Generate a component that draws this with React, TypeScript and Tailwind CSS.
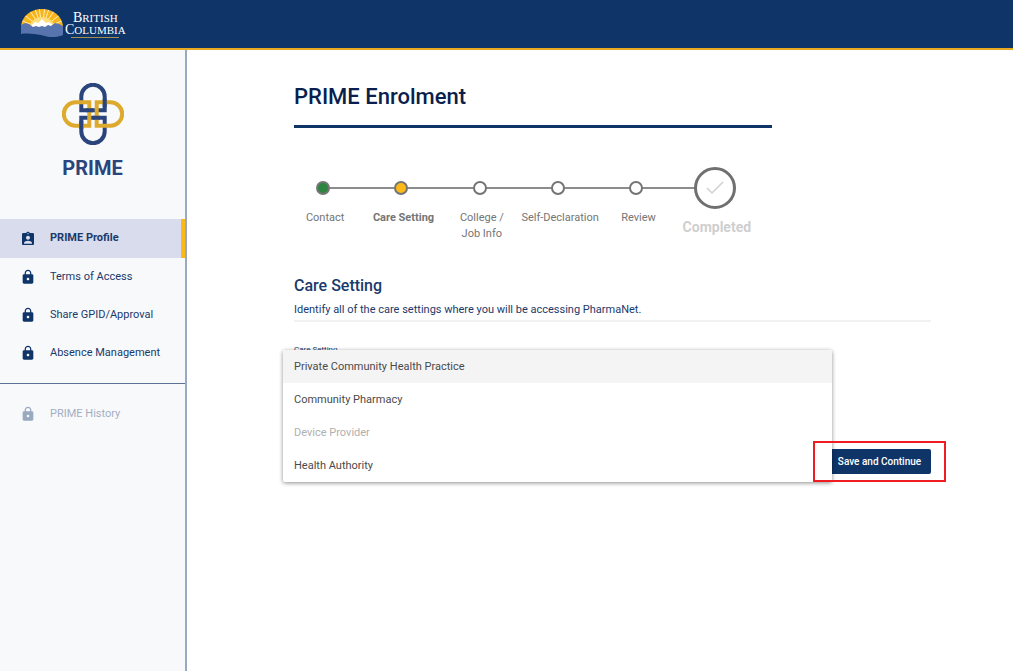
import React, { useState } from "react";
import clsx from "clsx";
import { MdAssignmentInd, MdLock } from "react-icons/md";

interface NavItem {
  label: string;
  icon: "profile" | "lock";
  active?: boolean;
}

interface Step {
  label: string;
  status: "done" | "current" | "todo";
}

interface CareOption {
  label: string;
  disabled?: boolean;
}

const navItems: NavItem[] = [
  { label: "PRIME Profile", icon: "profile", active: true },
  { label: "Terms of Access", icon: "lock" },
  { label: "Share GPID/Approval", icon: "lock" },
  { label: "Absence Management", icon: "lock" },
];

const steps: Step[] = [
  { label: "Contact", status: "done" },
  { label: "Care Setting", status: "current" },
  { label: "College /\nJob Info", status: "todo" },
  { label: "Self-Declaration", status: "todo" },
  { label: "Review", status: "todo" },
];

const careOptions: CareOption[] = [
  { label: "Private Community Health Practice" },
  { label: "Community Pharmacy" },
  { label: "Device Provider", disabled: true },
  { label: "Health Authority" },
];

const SunLogo = () => (
  <svg viewBox="0 0 42 28" className="mb-[3px] h-7 w-[42px]" aria-hidden="true">
    <defs>
      <clipPath id="sun-dome">
        <path d="M0 17C1 7 10 0 21 0s20 7 21 17v4H0z" />
      </clipPath>
    </defs>
    <g clipPath="url(#sun-dome)">
      <rect width="42" height="22" fill="#f7b51c" />
      <g stroke="#fff3cf" strokeWidth="0.9">
        <path d="M21 20L-1 11M21 20L1 4M21 20L7-1M21 20L13-3M21 20L18-3M21 20L24-3M21 20L29-3M21 20L35-1M21 20L41 4M21 20L43 11" />
      </g>
      <path d="M8 20a13 12 0 0 1 26 0z" fill="#fddc7a" />
      <path d="M8 20l2-3 4-4 3 1 4-4 4 4 3-1 5 4 1 3z" fill="#fff" />
    </g>
    <path
      d="M0 16l4-2 4 1 4 3 3-1 3 1 3-1 3 1 3-2 3 1 4-3 4 1 4 2v9c-5 2-11 3-18 1S6 24 0 25z"
      fill="#5874ae"
    />
  </svg>
);

const PrimeLogo = () => (
  <svg viewBox="0 0 62 62" className="size-[62px]" fill="none" strokeWidth="4" aria-hidden="true">
    <g stroke="#2a447c">
      <path d="M19.3 27.3V13.5a11.7 11.7 0 0 1 23.4 0v13.8z" />
      <path d="M19.3 34.7v13.8a11.7 11.7 0 0 0 23.4 0V34.7z" />
    </g>
    <g stroke="#deaa2e">
      <path d="M27.3 19.3H13.5a11.7 11.7 0 0 0 0 23.4h13.8z" />
      <path d="M34.7 19.3h13.8a11.7 11.7 0 0 1 0 23.4H34.7z" />
    </g>
    <g stroke="#2a447c">
      <path d="M42.7 16v8M19.3 38v8M24 27.3h7M31 34.7h7" />
    </g>
  </svg>
);

const Header = () => (
  <header className="flex h-[50px] shrink-0 items-center gap-0.5 border-b-2 border-[#e9aa22] bg-[#0e3468] pl-[21px]">
    <SunLogo />
    <div className="flex flex-col items-center pt-0.5 font-['Liberation_Serif',serif] text-[14px] leading-[11px] text-white">
      <span>
        B<span className="text-[11px]">RITISH</span>
      </span>
      <span>
        C<span className="text-[11px]">OLUMBIA</span>
      </span>
      <span className="mt-px h-px w-12 bg-[#a58f4d]" />
    </div>
  </header>
);

const NavLink = ({ item, muted = false }: { item: NavItem; muted?: boolean }) => {
  const Icon = item.icon === "profile" ? MdAssignmentInd : MdLock;
  return (
    <a
      href="#"
      className={clsx(
        "flex items-center gap-[14px] pl-5 text-[11px] text-[#1a3a6b]",
        item.active ? "h-[39px] border-r-4 border-[#fcba19] bg-[#d8dcec] font-bold" : "h-[38px]",
        muted && "opacity-40"
      )}
    >
      <Icon className="size-4 text-[#0e3468]" />
      {item.label}
    </a>
  );
};

const Sidebar = () => (
  <aside className="w-[187px] shrink-0 border-r-2 border-[#9aa8c2] bg-[#f8f9fb]">
    <div className="flex flex-col items-center pt-[33px]">
      <PrimeLogo />
      <span className="mt-[9px] text-[20px] leading-7 font-bold text-[#2a447c]">PRIME</span>
    </div>
    <nav className="mt-[37px]">
      {navItems.map((item) => (
        <NavLink key={item.label} item={item} />
      ))}
      <div className="mt-[11px] border-t border-[#5c7296] pt-[11px]">
        <NavLink item={{ label: "PRIME History", icon: "lock" }} muted />
      </div>
    </nav>
  </aside>
);

const Stepper = () => (
  <ol className="-ml-2 grid w-[470px] grid-cols-6 text-center text-[11px] leading-4 text-[#757575]">
    {steps.map((step) => (
      <li key={step.label} className="flex flex-col items-center">
        <div className="relative flex h-[42px] w-full items-center justify-center pr-1">
          <span
            className={clsx(
              "z-10 size-3.5 rounded-full border-2 border-[#757575]",
              step.status === "done" && "bg-[#2e8540]",
              step.status === "current" && "bg-[#fcba19]",
              step.status === "todo" && "bg-white"
            )}
          />
          <span className="absolute left-1/2 h-0.5 w-full bg-[#8c8c8c]" />
        </div>
        <span className={clsx("mt-px whitespace-pre", step.status === "current" && "font-bold")}>
          {step.label}
        </span>
      </li>
    ))}
    <li className="flex flex-col items-center">
      <div className="z-10 mr-1 flex size-[42px] items-center justify-center rounded-full border-3 border-[#707070] bg-white">
        <svg viewBox="0 0 18 14" className="h-3.5 w-[18px]" fill="none" stroke="#d0d0d0" strokeWidth="1.5" aria-hidden="true">
          <path d="M1 7l5 5L17 1" />
        </svg>
      </div>
      <span className="mt-2.5 text-[14px] font-bold text-[#cfcfcf]">Completed</span>
    </li>
  </ol>
);

const CareSettingField = () => {
  const [selected, setSelected] = useState(0);

  return (
    <div className="relative mt-[22px] h-[105px]">
      <span id="care-setting-label" className="block text-[8px] leading-3 text-[#1a3a6b]">
        Care Setting
      </span>
      <div
        role="listbox"
        aria-labelledby="care-setting-label"
        className="absolute top-1.5 right-[99px] -left-[11px] z-10 overflow-hidden rounded-xs bg-white shadow-[0_1px_4px_rgba(0,0,0,0.45)]"
      >
        {careOptions.map((option, idx) => (
          <button
            key={option.label}
            type="button"
            role="option"
            aria-selected={idx === selected}
            disabled={option.disabled}
            onClick={() => setSelected(idx)}
            className={clsx(
              "block h-[33px] w-full px-[11px] pt-0.5 text-left text-[11px]",
              option.disabled ? "text-[#b0b0b0]" : "text-[#4a4a4a]",
              idx === selected && "bg-[#f4f4f4]"
            )}
          >
            {option.label}
          </button>
        ))}
      </div>
    </div>
  );
};

export default function App() {
  return (
    <div className="flex min-h-screen flex-col bg-white font-[Roboto,sans-serif]">
      <Header />
      <div className="flex flex-1">
        <Sidebar />
        <main className="flex-1 pl-[25px]">
          <div className="mx-auto w-full max-w-[637px] pt-[31px]">
            <h1 className="text-[22px] leading-8 font-medium text-[#0a1f4d]">PRIME Enrolment</h1>
            <div className="mt-3 mb-[39px] h-[3px] w-3/4 bg-[#0e3468]" />
            <Stepper />

            <section className="mt-8">
              <h2 className="text-[16px] leading-6 font-medium text-[#1a3a6b]">Care Setting</h2>
              <p className="border-b-2 border-[#f1f1f1] pt-1 pb-0.5 text-[11px] leading-4 text-[#1a3a6b]">
                Identify all of the care settings where you will be accessing PharmaNet.
              </p>
              <CareSettingField />
              <div className="flex justify-end">
                <div className="relative">
                  <button
                    type="button"
                    className="block h-[25px] w-[103px] rounded-xs bg-[#0e3468] text-[10px] font-medium text-white"
                  >
                    Save and Continue
                  </button>
                  <div className="pointer-events-none absolute -inset-x-[15px] -inset-y-2 z-20 border-2 border-[#f01c24]" />
                </div>
              </div>
            </section>
          </div>
        </main>
      </div>
    </div>
  );
}
